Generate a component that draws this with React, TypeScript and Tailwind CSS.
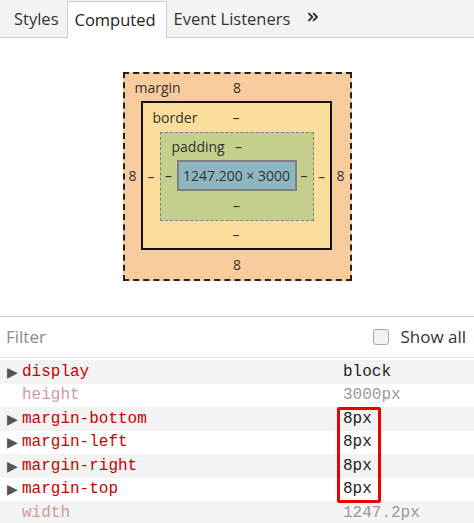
import { ChevronsRight } from 'lucide-react'

const PROPS = [
  { name: 'display', value: 'block', dim: false, arrow: true },
  { name: 'height', value: '3000px', dim: true, arrow: false },
  { name: 'margin-bottom', value: '8px', dim: false, arrow: true },
  { name: 'margin-left', value: '8px', dim: false, arrow: true },
  { name: 'margin-right', value: '8px', dim: false, arrow: true },
  { name: 'margin-top', value: '8px', dim: false, arrow: true },
  { name: 'width', value: '1247.2px', dim: true, arrow: false },
]

const ui = { fontFamily: '"Open Sans", "Noto Sans", sans-serif' }
const mono = { fontFamily: '"Liberation Mono", "DejaVu Sans Mono", monospace' }

function PropRow({ p, i }: { p: (typeof PROPS)[number]; i: number }) {
  return (
    <div className={`flex h-[23.5px] items-center ${i % 2 === 0 ? 'bg-[#f3f3f3]' : 'bg-white'}`}>
      <div className="flex w-[22px] justify-center pl-[2px]">
        {p.arrow && <span className="text-[14px] leading-none text-[#555]">▶</span>}
      </div>
      <span className={`w-[321px] text-[16px] ${p.dim ? 'text-[#d29a9a]' : 'text-[#c80000]'}`} style={mono}>
        {p.name}
      </span>
      <span className={`text-[16px] ${p.dim ? 'text-[#9a9a9a]' : 'text-[#222]'}`} style={mono}>
        {p.value}
      </span>
    </div>
  )
}

export default function App() {
  return (
    <div className="w-[474px] h-[523px] overflow-hidden bg-white text-[#333]" style={ui}>
      {/* Tabs */}
      <div className="flex h-[38px] items-end border-b border-[#cccccc] bg-[#f3f3f3] pl-[6px]">
        <div className="flex h-[36px] items-center px-[8px] text-[16.5px] text-[#333]">Styles</div>
        <div className="-mb-px flex h-[37px] items-center border border-b-0 border-[#cccccc] bg-white pl-[7px] pr-[10px] text-[16.5px] text-[#222]">
          Computed
        </div>
        <div className="flex h-[36px] items-center px-[7px] text-[16.5px] text-[#333]">Event Listeners</div>
        <div className="flex h-[36px] items-center pl-[8px] pb-[4px]">
          <ChevronsRight size={16} strokeWidth={3} className="text-[#333]" />
        </div>
      </div>

      {/* Box model */}
      <div className="flex h-[278px] justify-center pt-[34px] text-[14px] leading-none">
        <div className="flex h-[209px] w-[229px] flex-col border-2 border-dashed border-[#222] bg-[#f9cc9d]">
          <div className="grid h-[27px] grid-cols-[1fr_auto_1fr] items-center">
            <span className="pl-[10px]">margin</span>
            <span>8</span>
            <span />
          </div>
          <div className="flex items-center">
            <span className="w-[16px] text-center">8</span>
            <div className="flex h-[149px] w-[191px] flex-col border-2 border-[#111] bg-[#fddd9b]">
              <div className="grid h-[29px] grid-cols-[1fr_auto_1fr] items-center">
                <span className="pl-[10px]">border</span>
                <span>–</span>
                <span />
              </div>
              <div className="flex items-center">
                <span className="w-[17px] text-center">–</span>
                <div className="flex h-[89px] w-[154px] flex-col border-[1.5px] border-dashed border-[#808080] bg-[#c3cf8a]">
                  <div className="grid h-[27px] grid-cols-[1fr_auto_1fr] items-center">
                    <span className="pl-[11px]">padding</span>
                    <span className="pl-[4px]">–</span>
                    <span />
                  </div>
                  <div className="flex items-center">
                    <span className="w-[16px] text-center">–</span>
                    <div className="flex h-[31px] w-[120px] items-center justify-center border-2 border-[#808080] bg-[#8cb6c0]">
                      1247.200 × 3000
                    </div>
                    <span className="w-[15px] text-center">–</span>
                  </div>
                  <div className="flex flex-1 items-center justify-center">–</div>
                </div>
                <span className="w-[16px] text-center">–</span>
              </div>
              <div className="flex flex-1 items-center justify-center">–</div>
            </div>
            <span className="w-[18px] text-center">8</span>
          </div>
          <div className="flex flex-1 items-center justify-center">8</div>
        </div>
      </div>

      {/* Filter */}
      <div className="border-t border-[#cccccc]">
        <div className="flex h-[41px] items-center justify-between border-b border-[#e4e4e4] pl-[6px] pr-[8px]">
          <span className="text-[17px] text-[#8a8a8a]">Filter</span>
          <label className="flex items-center gap-[11px] text-[17px] text-[#333]">
            <span className="h-[16px] w-[16px] rounded-[3px] border border-[#a8a8a8] bg-[#f2f2f2]" />
            Show all
          </label>
        </div>
        <div className="relative pt-[2px]">
          {PROPS.map((p, i) => (
            <PropRow key={p.name} p={p} i={i} />
          ))}
          <div className="absolute left-[337px] top-[49px] h-[96px] w-[44px] rounded-[2px] border-[3px] border-[#ee0000]" />
        </div>
      </div>
    </div>
  )
}
